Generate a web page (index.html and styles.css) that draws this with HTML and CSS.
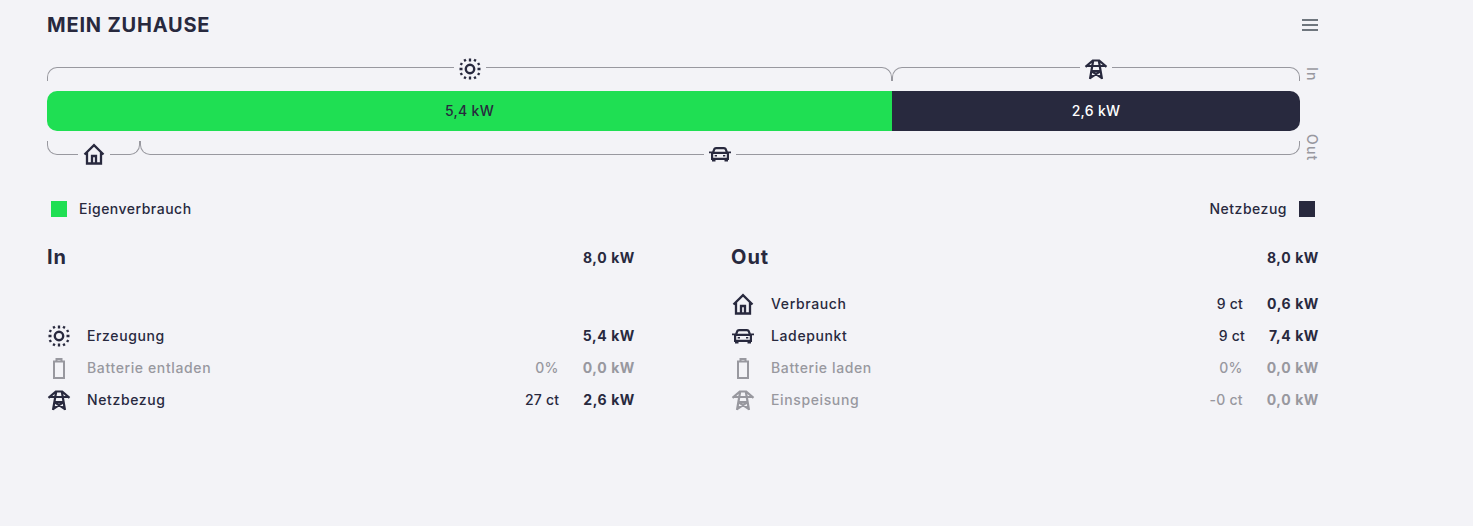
FILE: index.html
```html
<!DOCTYPE html>
<html lang="de">
<head>
    <meta charset="UTF-8">
    <meta name="viewport" content="width=device-width, initial-scale=1.0">
    <title>Mein Zuhause</title>
    <link rel="stylesheet" href="styles.css">
</head>
<body>
    <svg class="sprites" width="0" height="0">
        <symbol id="i-sun" viewBox="0 0 24 24">
            <circle cx="12" cy="12" r="4.200" fill="none" stroke="currentColor" stroke-width="2.400"/>
            <g stroke="currentColor" stroke-width="2.300">
                <path d="M12 1.500v3M12 19.500v3M1.500 12h3M19.500 12h3"/>
                <path d="M6.400 2.300l1.200 2.100M16.400 19.600l1.200 2.100M2.300 17.600l2.100-1.200M19.600 7.600l2.100-1.200M17.600 2.300l-1.200 2.100M7.600 19.600l-1.200 2.100M2.300 6.400l2.100 1.200M19.600 16.400l2.100 1.200"/>
            </g>
        </symbol>
        <symbol id="i-home" viewBox="0 0 24 24">
            <path d="M2.500 12.500L12 3.200l9.500 9.300M5 10.200V21.500h14V10.200M10 21.500v-7.500h4v7.500" fill="none" stroke="currentColor" stroke-width="2.300"/>
        </symbol>
        <symbol id="i-car" viewBox="0 0 24 24">
            <path fill="currentColor" fill-rule="evenodd" d="M8 5h8c1.300 0 2.300.7 2.700 1.800L19.800 9.500H23V11.200h-2V18h-1v1.500h-3.500V18h-9v1.500H4V18H3v-6.800H1V9.500h3.200l1.100-2.700C5.700 5.700 6.700 5 8 5zm.2 2.200c-.4 0-.8.200-1 .6L6.500 9.800h11l-.7-2c-.2-.4-.6-.6-1-.6H8.200zM5.200 12v3.800h13.600V12H5.200zm1.500 1h2.300v1.500H6.700V13zm8.300 0h2.300v1.500H15V13z"/>
        </symbol>
        <symbol id="i-tower" viewBox="0 0 24 24">
            <path d="M9.200 3.500L6 22M14.800 3.500L18 22M1.500 9.800L8.800 3.500h6.400l7.300 6.300M3 9h18M7.500 14h9M7.400 14l9.800 6.500M16.600 14L6.800 20.500" fill="none" stroke="currentColor" stroke-width="2.200"/>
        </symbol>
        <symbol id="i-battery" viewBox="0 0 24 24">
            <path d="M7 5.500h10V22H7zM9.500 5.500V3h5v2.500" fill="none" stroke="currentColor" stroke-width="2"/>
        </symbol>
    </svg>

    <div class="container">
        <div class="header">
            <h1>MEIN ZUHAUSE</h1>
            <button class="menu" type="button" aria-label="Menü"><span></span><span></span><span></span></button>
        </div>

        <div class="energy">
            <div class="bracket-row">
                <div class="brackets">
                    <div class="bracket top" style="width: 845px"><svg class="ico on-line"><use href="#i-sun"/></svg></div>
                    <div class="bracket top" style="width: 408px"><svg class="ico on-line"><use href="#i-tower"/></svg></div>
                </div>
                <span class="side-label">In</span>
            </div>
            <div class="bar">
                <div class="bar-self" style="width: 845px">5,4 kW</div>
                <div class="bar-grid" style="width: 408px">2,6 kW</div>
            </div>
            <div class="bracket-row">
                <div class="brackets">
                    <div class="bracket bottom" style="width: 93px"><svg class="ico on-line"><use href="#i-home"/></svg></div>
                    <div class="bracket bottom" style="width: 1160px"><svg class="ico on-line"><use href="#i-car"/></svg></div>
                </div>
                <span class="side-label">Out</span>
            </div>
        </div>

        <div class="legend">
            <div class="legend-item"><span class="swatch green"></span>Eigenverbrauch</div>
            <div class="legend-item">Netzbezug<span class="swatch dark"></span></div>
        </div>

        <div class="details">
            <div class="col">
                <div class="col-head"><h3>In</h3><span class="power">8,0 kW</span></div>
                <div class="row empty"></div>
                <div class="row"><svg class="ico"><use href="#i-sun"/></svg><span class="name">Erzeugung</span><span class="power">5,4 kW</span></div>
                <div class="row off"><svg class="ico"><use href="#i-battery"/></svg><span class="name">Batterie entladen</span><span class="extra">0%</span><span class="power">0,0 kW</span></div>
                <div class="row"><svg class="ico"><use href="#i-tower"/></svg><span class="name">Netzbezug</span><span class="extra">27 ct</span><span class="power">2,6 kW</span></div>
            </div>
            <div class="col">
                <div class="col-head"><h3>Out</h3><span class="power">8,0 kW</span></div>
                <div class="row"><svg class="ico"><use href="#i-home"/></svg><span class="name">Verbrauch</span><span class="extra">9 ct</span><span class="power">0,6 kW</span></div>
                <div class="row"><svg class="ico"><use href="#i-car"/></svg><span class="name">Ladepunkt</span><span class="extra">9 ct</span><span class="power">7,4 kW</span></div>
                <div class="row off"><svg class="ico"><use href="#i-battery"/></svg><span class="name">Batterie laden</span><span class="extra">0%</span><span class="power">0,0 kW</span></div>
                <div class="row off"><svg class="ico"><use href="#i-tower"/></svg><span class="name">Einspeisung</span><span class="extra">-0 ct</span><span class="power">0,0 kW</span></div>
            </div>
        </div>
    </div>
</body>
</html>
```

FILE: styles.css
```css
body {
    font-family: 'Inter', 'Liberation Sans', sans-serif;
    font-size: 14px;
    font-weight: 500;
    letter-spacing: 0.5px;
    background-color: #f3f3f7;
    margin: 0;
    padding: 0;
    color: #28293e;
}

.sprites {
    position: absolute;
}

.container {
    width: 1272px;
    margin-left: 47px;
}

.header {
    display: flex;
    align-items: center;
    justify-content: space-between;
    height: 24px;
    padding-top: 13px;
}

h1 {
    margin: 0;
    font-size: 20px;
    font-weight: 700;
    letter-spacing: 0.8px;
    line-height: 24px;
}

.menu {
    display: flex;
    flex-direction: column;
    gap: 3px;
    width: 16px;
    margin: 0 1px 0 0;
    padding: 0;
    background: none;
    border: none;
}

.menu span {
    height: 2px;
    background-color: #6f767e;
}

.energy {
    margin-top: 30px;
}

.bracket-row {
    display: flex;
    align-items: center;
    height: 14px;
}

.brackets {
    display: flex;
    width: 1253px;
    height: 14px;
}

.bracket {
    position: relative;
    box-sizing: border-box;
    height: 14px;
    border: 0 solid #98989f;
    border-left-width: 1px;
    border-right-width: 1px;
}

.bracket.top {
    border-top-width: 1px;
    border-radius: 10px 10px 0 0;
}

.bracket.bottom {
    border-bottom-width: 1px;
    border-radius: 0 0 10px 10px;
}

.ico {
    flex-shrink: 0;
    width: 24px;
    height: 24px;
}

.on-line {
    position: absolute;
    left: 50%;
    padding: 0 4px;
    margin-left: -16px;
    background-color: #f3f3f7;
}

.top .on-line {
    top: -11px;
}

.bottom .on-line {
    bottom: -12px;
}

.side-label {
    writing-mode: vertical-rl;
    margin-left: 5px;
    color: #98989f;
    letter-spacing: 1.2px;
    line-height: 14px;
}

.bar {
    display: flex;
    height: 40px;
    margin: 10px 0;
    border-radius: 10px;
    overflow: hidden;
    width: 1253px;
    letter-spacing: 0.3px;
    line-height: 40px;
    text-align: center;
}

.bar-self {
    background-color: #1fdf53;
}

.bar-grid {
    background-color: #28293e;
    color: #fff;
}

.legend {
    display: flex;
    justify-content: space-between;
    margin-top: 46px;
    padding: 0 4px;
    line-height: 14px;
}

.legend-item {
    display: flex;
    align-items: center;
    gap: 12px;
    height: 16px;
}

.swatch {
    width: 16px;
    height: 16px;
}

.swatch.green {
    background-color: #1fdf53;
}

.swatch.dark {
    background-color: #28293e;
}

.details {
    display: grid;
    grid-template-columns: 588px 588px;
    gap: 96px;
    margin-top: 25px;
}

.col-head {
    display: flex;
    align-items: center;
    justify-content: space-between;
    height: 30px;
    margin-bottom: 16px;
}

h3 {
    margin: 0;
    font-size: 20px;
    font-weight: 700;
    letter-spacing: 1px;
}

.row {
    display: flex;
    align-items: center;
    height: 32px;
}

.row .ico {
    margin-right: 16px;
}

.name,
.extra,
.row .power {
    margin-top: -2px;
}

.name {
    flex-grow: 1;
    letter-spacing: 0.62px;
}

.extra {
    margin-right: 24px;
    letter-spacing: 0.2px;
}

.power {
    font-weight: 700;
    letter-spacing: 0.6px;
}

.off {
    color: #98989f;
}
```
